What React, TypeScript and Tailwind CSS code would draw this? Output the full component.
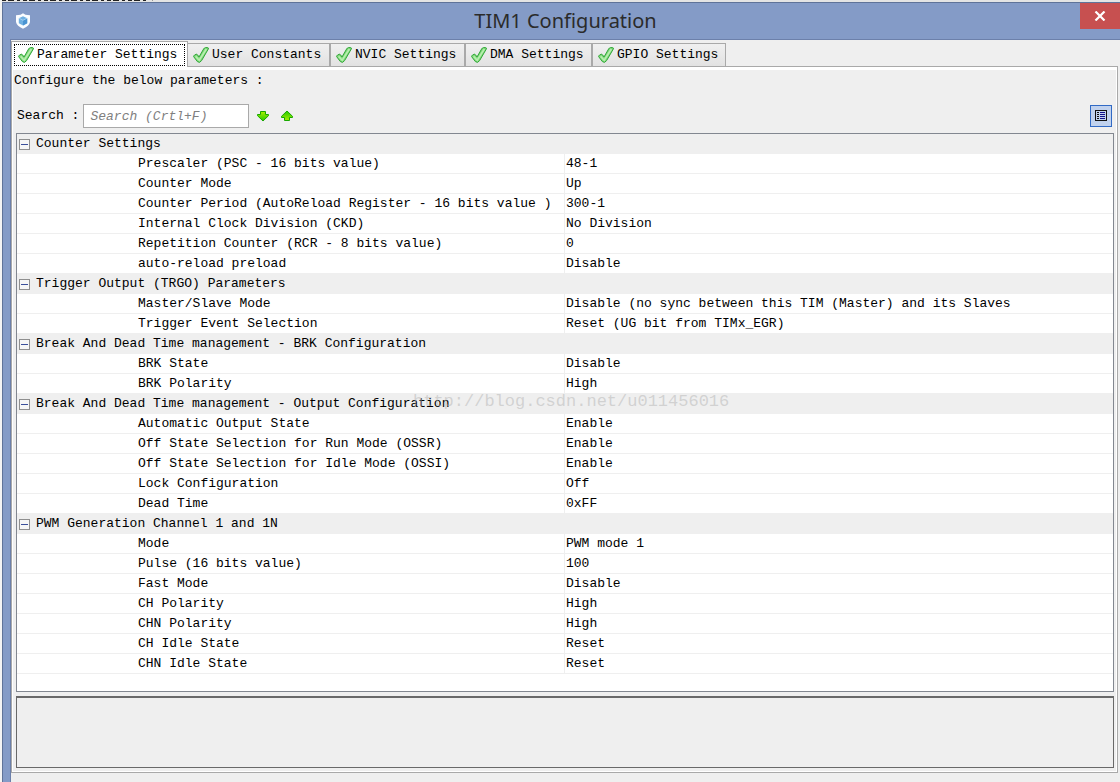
import React from "react";

type Group = { title: string; rows: [string, string][] };

const groups: Group[] = [
  {
    title: "Counter Settings",
    rows: [
      ["Prescaler (PSC - 16 bits value)", "48-1"],
      ["Counter Mode", "Up"],
      ["Counter Period (AutoReload Register - 16 bits value )", "300-1"],
      ["Internal Clock Division (CKD)", "No Division"],
      ["Repetition Counter (RCR - 8 bits value)", "0"],
      ["auto-reload preload", "Disable"],
    ],
  },
  {
    title: "Trigger Output (TRGO) Parameters",
    rows: [
      ["Master/Slave Mode", "Disable (no sync between this TIM (Master) and its Slaves"],
      ["Trigger Event Selection", "Reset (UG bit from TIMx_EGR)"],
    ],
  },
  {
    title: "Break And Dead Time management - BRK Configuration",
    rows: [
      ["BRK State", "Disable"],
      ["BRK Polarity", "High"],
    ],
  },
  {
    title: "Break And Dead Time management - Output Configuration",
    rows: [
      ["Automatic Output State", "Enable"],
      ["Off State Selection for Run Mode (OSSR)", "Enable"],
      ["Off State Selection for Idle Mode (OSSI)", "Enable"],
      ["Lock Configuration", "Off"],
      ["Dead Time", "0xFF"],
    ],
  },
  {
    title: "PWM Generation Channel 1 and 1N",
    rows: [
      ["Mode", "PWM mode 1"],
      ["Pulse (16 bits value)", "100"],
      ["Fast Mode", "Disable"],
      ["CH Polarity", "High"],
      ["CHN Polarity", "High"],
      ["CH Idle State", "Reset"],
      ["CHN Idle State", "Reset"],
    ],
  },
];

const tabs = [
  { label: "User Constants", width: "w-[143px]" },
  { label: "NVIC Settings", width: "w-[135px]" },
  { label: "DMA Settings", width: "w-[127px]" },
  { label: "GPIO Settings", width: "w-[133px]" },
];

function Check() {
  return (
    <svg className="h-4 w-4 shrink-0" viewBox="0 0 16 16" aria-hidden="true">
      <path
        d="M0.6 9.6 Q0.5 8.8 1.4 8.2 L3 7.3 Q4 6.9 4.6 7.9 L6 10 L10.6 2 Q11.3 0.7 12.6 0.6 L14.6 0.6 Q15.8 0.8 15.3 2 L8.6 13.6 Q6.6 16.6 4.4 14.6 Z"
        fill="#7fd97a"
        stroke="#2fa536"
        strokeLinejoin="round"
      />
      <path d="M2.6 9.4 L6.2 13.2 L13.4 2" fill="none" stroke="#b9efb0" strokeWidth="1.6" />
    </svg>
  );
}

function Arrow({ up = false }: { up?: boolean }) {
  return (
    <svg className="h-3 w-3" viewBox="0 0 12 12" aria-hidden="true">
      <defs>
        <linearGradient id={up ? "upFill" : "downFill"} x1="0" y1="0" x2="0" y2="1">
          <stop offset="0" stopColor={up ? "#22c800" : "#a8f000"} />
          <stop offset="1" stopColor={up ? "#a8f000" : "#22c800"} />
        </linearGradient>
      </defs>
      <path
        d={
          up
            ? "M3.5 10.5 H8.5 V7.5 H11.5 V6.3 L6 1 L0.5 6.3 V7.5 H3.5 Z"
            : "M3.5 1.5 H8.5 V4.5 H11.5 V5.7 L6 11 L0.5 5.7 V4.5 H3.5 Z"
        }
        fill={up ? "url(#upFill)" : "url(#downFill)"}
        stroke="#18a800"
        strokeLinejoin="round"
      />
    </svg>
  );
}

export default function App() {
  return (
    <div className="relative flex min-h-screen flex-col bg-[#f4f4f4] pl-0.5 font-['Liberation_Mono','Noto_Sans_CJK_SC',monospace] text-[13px] leading-5 text-black">
      <div className="h-0.5 shrink-0 bg-[#e4e4e4]">
        <svg className="block h-px w-[152px]" viewBox="0 0 152 1" aria-hidden="true">
          <path d="M0 0.5 H146" stroke="#222" strokeDasharray="4 2 6 3 3 3" />
          <path d="M150 0.5 H151" stroke="#999" />
        </svg>
      </div>
      <div className="flex grow flex-col border-l border-t border-[#5f7399] bg-[#849bc7]">
        <header className="grid h-9 grid-cols-[1fr_auto_1fr] items-center pl-3">
          <svg className="h-4 w-4" viewBox="0 0 16 16" aria-hidden="true">
            <path d="M8 0.2 L10.5 1.8 L15 2.2 V9 Q14.2 13 8 15.8 Q1.8 13 1 9 V2.2 L5.5 1.8 Z" fill="#fbfdff" />
            <path d="M8 3.3 L12.2 5.2 V10.2 L8 12.4 L3.8 10.2 V5.2 Z" fill="#6fb0e2" />
            <path d="M8 7.3 L12.2 5.2 V10.2 L8 12.4 Z" fill="#4a94d2" />
            <path d="M4 5.2 L8 7.3 L12 5.2" fill="none" stroke="#b9def6" strokeWidth="0.7" />
          </svg>
          <h1 className="pr-1 font-['Noto_Sans','Noto_Sans_CJK_SC',sans-serif] text-xl text-[#2b2b2b]">TIM1 Configuration</h1>
          <button aria-label="Close" className="flex h-[26px] w-10 items-center justify-center self-start justify-self-end bg-[#c75050]">
            <svg className="h-[10px] w-3" viewBox="0 0 12 10" aria-hidden="true">
              <path d="M1.5 0.5 L10.5 9.5 M10.5 0.5 L1.5 9.5" stroke="white" strokeWidth="2.2" />
            </svg>
          </button>
        </header>
        <main className="ml-[7px] flex grow flex-col border-l border-t border-[#6c80aa] bg-[#efefef] pr-0.5 pt-px">
          <div role="tablist" className="relative -mb-px flex items-end">
            <button
              role="tab"
              aria-selected="true"
              className="flex h-[26px] w-[177px] border border-b-0 border-[#a9a9a9] bg-white px-0.5 pt-0.5"
            >
              <span className="flex h-[22px] w-full items-center gap-[3px] border border-dotted border-black pl-[3px]">
                <Check />
                Parameter Settings
              </span>
            </button>
            {tabs.map((t) => (
              <button
                key={t.label}
                role="tab"
                aria-selected="false"
                className={
                  t.width +
                  " flex h-6 items-center gap-[3px] border border-l-0 border-r-2 border-[#a9a9a9] bg-linear-to-b from-[#f0f0f0] to-[#e2e2e2] pl-[5px] last:border-r"
                }
              >
                <Check />
                {t.label}
              </button>
            ))}
          </div>
          <section role="tabpanel" className="flex grow flex-col border border-[#a9a9a9] bg-[#efefef]">
            <div className="h-[3px] bg-white" />
            <div className="flex grow flex-col border-x border-b border-white pr-0.5 pb-[3px]">
              <p className="mt-px pl-px">Configure the below parameters :</p>
              <div className="mt-[11px] flex h-7 items-center pr-0.5 pl-1">
                <label htmlFor="search" className="mr-1">Search :</label>
                <input
                  id="search"
                  placeholder="Search (Crtl+F)"
                  className="h-6 w-[166px] border border-[#a9a9a9] bg-white px-1.5 italic placeholder:text-[#808080]"
                />
                <button aria-label="Next match" className="ml-2"><Arrow /></button>
                <button aria-label="Previous match" className="ml-3"><Arrow up /></button>
                <button aria-label="Show details" className="ml-auto flex h-[22px] w-[22px] items-center justify-center border border-[#316ac5] bg-[#c1d2ee]">
                  <svg className="h-3 w-3" viewBox="0 0 12 12" shapeRendering="crispEdges" aria-hidden="true">
                    <rect x="0.5" y="0.5" width="11" height="10" fill="none" stroke="#111" />
                    <path d="M2 2.5 H4 M2 4.5 H4 M2 6.5 H4 M2 8.5 H4" stroke="#111" />
                    <path d="M5 2.5 H10 M5 4.5 H10 M5 6.5 H10 M5 8.5 H10" stroke="#10108a" />
                  </svg>
                </button>
              </div>
              <div className="mt-[3px] ml-[3px] grow border border-[#828790] bg-white">
                <table className="w-full table-fixed border-collapse">
                  <colgroup>
                    <col className="w-[548px]" />
                    <col />
                  </colgroup>
                  {groups.map((g) => (
                    <tbody key={g.title}>
                      <tr className="h-5 bg-[#efefef]">
                        <th colSpan={2} className="p-0 text-left font-normal">
                          <div className="flex h-5 items-center gap-1.5 pl-0.5">
                            <button aria-label={"Collapse " + g.title} className="flex h-[11px] w-[11px] items-center justify-center border border-[#8f8f8f] bg-[#f6f6f6]">
                              <span className="h-px w-[7px] bg-[#3b4f9a]" />
                            </button>
                            {g.title}
                          </div>
                        </th>
                      </tr>
                      {g.rows.map(([k, v]) => (
                        <tr key={k} className="h-5">
                          <td className="p-0">
                            <div className="h-5 overflow-hidden border-r border-b border-[#efefef] pl-[121px] leading-5 whitespace-nowrap">{k}</div>
                          </td>
                          <td className="p-0">
                            <div className="h-5 border-b border-[#efefef] pl-px leading-5 whitespace-nowrap">{v}</div>
                          </td>
                        </tr>
                      ))}
                    </tbody>
                  ))}
                </table>
              </div>
              <div className="mt-1 ml-[3px] h-[72px] shrink-0 border border-t-2 border-[#696969]" />
            </div>
          </section>
          <div className="h-[9px] shrink-0" />
        </main>
      </div>
      <div className="pointer-events-none absolute top-[392px] left-[413px] text-[17px] leading-5 text-[#b4b4b4]/50">
        http://blog.csdn.net/u011456016
      </div>
    </div>
  );
}
